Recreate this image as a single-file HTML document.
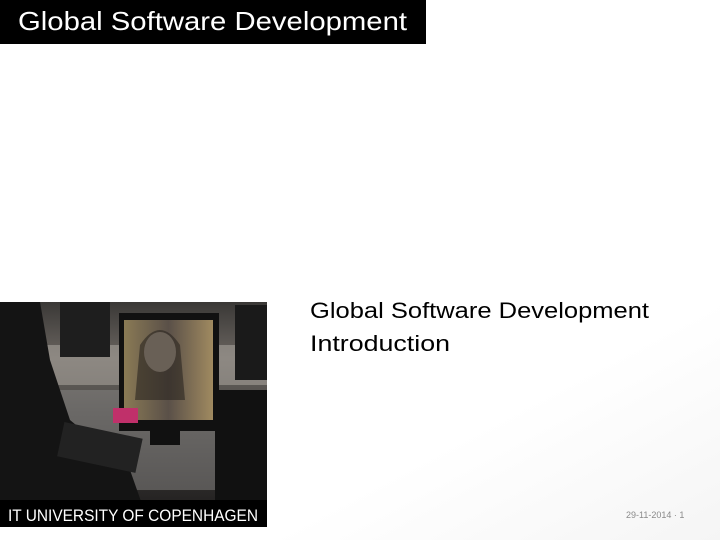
<!DOCTYPE html>
<html><head><meta charset="utf-8"><style>
html,body{margin:0;padding:0;width:720px;height:540px;overflow:hidden;background:#fff;font-family:"Liberation Sans",sans-serif}
svg{position:absolute;left:0;top:0}
</style></head><body>
<svg width="720" height="540" xmlns="http://www.w3.org/2000/svg">
<defs>
<linearGradient id="bg" x1="0" y1="0" x2="1" y2="1"><stop offset="0" stop-color="#fff"/><stop offset="0.5" stop-color="#fff"/><stop offset="1" stop-color="#f5f5f5"/></linearGradient>
<linearGradient id="room" x1="0" y1="0" x2="0" y2="1"><stop offset="0" stop-color="#3a3836"/><stop offset="0.25" stop-color="#6a6560"/><stop offset="0.5" stop-color="#4a4846"/><stop offset="1" stop-color="#1a1818"/></linearGradient>
<linearGradient id="scr" x1="0" y1="0" x2="1" y2="0"><stop offset="0" stop-color="#8a7a55"/><stop offset="0.5" stop-color="#5a5048"/><stop offset="1" stop-color="#a08a60"/></linearGradient>
</defs>
<rect x="267" y="300" width="453" height="240" fill="url(#bg)"/>
<rect x="0" y="0" width="426" height="44" fill="#000"/>
<text x="18" y="30" fill="#fff" font-size="26" textLength="389" lengthAdjust="spacingAndGlyphs">Global Software Development</text>
<text x="310" y="318" fill="#000" font-size="22" textLength="339" lengthAdjust="spacingAndGlyphs">Global Software Development</text>
<text x="310" y="351" fill="#000" font-size="22" textLength="140" lengthAdjust="spacingAndGlyphs">Introduction</text>
<text x="626" y="518" fill="#8a8a8a" font-size="9">29-11-2014 · 1</text>
<rect x="0" y="302" width="267" height="225" fill="url(#room)"/>
<rect x="30" y="345" width="237" height="40" fill="#a5a09a" opacity="0.6"/>
<rect x="60" y="302" width="50" height="55" fill="#1e1e1e"/>
<rect x="235" y="305" width="32" height="75" fill="#1a1a1a"/>
<rect x="40" y="390" width="190" height="100" fill="#8a8885" opacity="0.5"/>
<rect x="119" y="313" width="100" height="118" fill="#111"/>
<rect x="124" y="320" width="89" height="100" fill="url(#scr)"/>
<ellipse cx="160" cy="352" rx="16" ry="20" fill="#c8b8a8"/>
<path d="M140 345 Q160 315 180 345 L185 400 L135 400 Z" fill="#2a2420" opacity="0.6"/>
<rect x="150" y="425" width="30" height="20" fill="#111"/>
<rect x="113" y="408" width="25" height="15" fill="#c0306a"/>
<path d="M0 302 L40 302 L50 360 L70 420 L130 470 L150 527 L0 527 Z" fill="#141414"/>
<rect x="60" y="430" width="80" height="35" fill="#222" transform="rotate(12 100 447)"/>
<rect x="215" y="390" width="52" height="110" fill="#111"/>
<rect x="0" y="500" width="267" height="27" fill="#000"/>
<text x="8" y="521" fill="#fff" font-size="17" textLength="250" lengthAdjust="spacingAndGlyphs">IT UNIVERSITY OF COPENHAGEN</text>
</svg>
</body></html>
